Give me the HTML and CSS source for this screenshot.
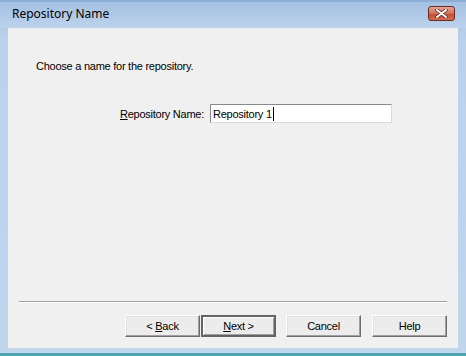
FILE: index.html
```html
<!DOCTYPE html>
<html lang="en">
  <head>
    <meta charset="UTF-8" />
    <title>Repository Name</title>
    <link rel="stylesheet" href="styles.css">
  </head>
  <body>
    <div class="window">
      <div class="titlebar">
        <span class="title">Repository Name</span>
        <span class="close">
          <svg width="13" height="9" viewBox="0 0 13 9">
            <path d="M2 1 L11 8 M11 1 L2 8" stroke="#5a1a10" stroke-width="3.4" stroke-linecap="round" />
            <path d="M2 1 L11 8 M11 1 L2 8" stroke="#fff" stroke-width="2" stroke-linecap="round" />
          </svg>
        </span>
      </div>
      <div class="client">
        <p class="intro">Choose a name for the repository.</p>
        <div class="field">
          <label class="label" for="repoName"><u>R</u>epository Name:</label>
          <div class="textbox" id="repoName">Repository 1<span class="caret"></span></div>
        </div>
        <div class="spacer"></div>
        <div class="separator"></div>
        <div class="buttons">
          <button class="btn">&lt; <u>B</u>ack</button>
          <button class="btn default"><u>N</u>ext &gt;</button>
          <button class="btn cancel">Cancel</button>
          <button class="btn help">Help</button>
        </div>
      </div>
      <div class="bottom-frame"></div>
    </div>
  </body>
</html>
```

FILE: styles.css
```css
* {
  padding: 0;
  margin: 0;
  box-sizing: border-box;
}
body {
  width: 466px;
  height: 356px;
  overflow: hidden;
  background: #fff;
}
.window {
  width: 466px;
  height: 356px;
  display: flex;
  flex-direction: column;
  background: linear-gradient(#a7c2e2, #bcd2eb 40px, #c0d6ed);
  border-top: 2px solid #8eaed6;
}
.titlebar {
  height: 26px;
  display: flex;
  align-items: center;
  padding: 0 11px 0 12px;
  background: linear-gradient(#a4c0e2, #bdd3ec);
}
.title {
  flex: 1;
  font-family: "Noto Sans", sans-serif;
  font-size: 12px;
  color: #000;
  margin-top: -3px;
}
.close {
  width: 27px;
  height: 15px;
  margin-top: -3px;
  display: flex;
  align-items: center;
  justify-content: center;
  border: 1px solid #6b2a22;
  border-radius: 3px;
  background: linear-gradient(#e3a493, #d3705a 50%, #c24a33 51%, #d56b4f);
}
.client {
  flex: 1;
  margin: 0 8px;
  background: #f0f0f0;
  display: flex;
  flex-direction: column;
  padding: 32px 11px 11px 11px;
  font-family: "Liberation Sans", Arial, sans-serif;
  font-size: 11px;
  letter-spacing: -0.25px;
  color: #000;
}
.intro {
  line-height: 13px;
  margin-left: 17px;
}
.field {
  display: flex;
  align-items: center;
  margin-top: 31px;
}
.label {
  width: 185px;
  text-align: right;
  margin-right: 6px;
}
.textbox {
  width: 182px;
  height: 19px;
  background: #fff;
  border: 1px solid;
  border-color: #8a8a8a #dadada #dadada #8a8a8a;
  padding: 2px 0 0 2px;
  line-height: 14px;
  font-size: 11px;
}
.caret {
  display: inline-block;
  width: 1px;
  height: 14px;
  background: #000;
  vertical-align: top;
  margin-left: 1px;
}
.spacer {
  flex: 1;
}
.separator {
  height: 2px;
  border-top: 1px solid #a0a0a0;
  border-bottom: 1px solid #fff;
}
.buttons {
  display: flex;
  justify-content: flex-end;
  margin-top: 12px;
}
.btn {
  width: 75px;
  height: 22px;
  font-family: "Liberation Sans", Arial, sans-serif;
  font-size: 11px;
  letter-spacing: -0.25px;
  color: #000;
  background: #ececec;
  border: 1px solid;
  border-color: #fff #6d6d6d #6d6d6d #fff;
  box-shadow: inset -1px -1px 0 #a0a0a0, inset 1px 1px 0 #e3e3e3;
}
.btn.default {
  margin-left: 1px;
  border: 2px solid #646464;
  box-shadow: inset 1px 1px 0 #fff, inset -1px -1px 0 #a0a0a0;
}
.btn.cancel {
  margin-left: 10px;
}
.btn.help {
  margin-left: 11px;
}
.bottom-frame {
  height: 8px;
  border-bottom: 3px solid #4ea6b4;
}
```
